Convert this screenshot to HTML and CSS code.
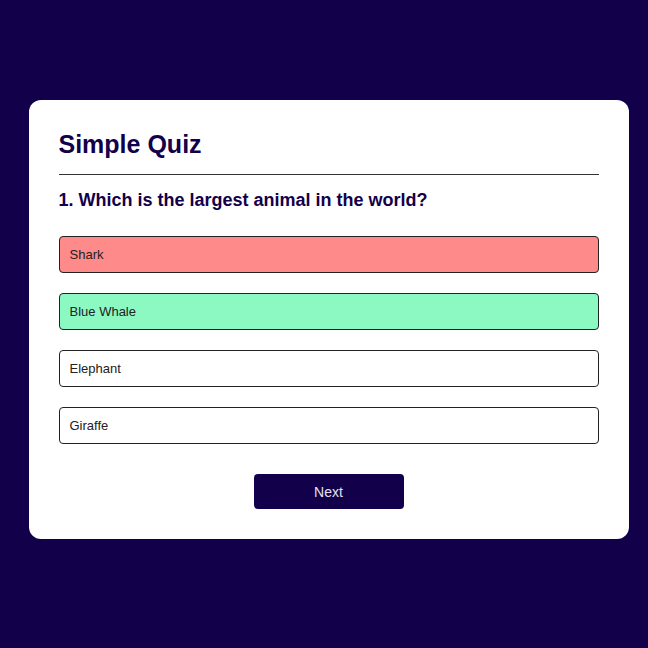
FILE: index.html
```html
<!DOCTYPE html>
<html>
<head>
<meta charset="utf-8">
<link rel="stylesheet" href="styles.css">
</head>
<body>
<div class="app">
  <h1 class="title">Simple Quiz</h1>
  <div class="quiz">
    <h2 class="question">1. Which is the largest animal in the world?</h2>
    <div class="answers">
      <button class="btn incorrect">Shark</button>
      <button class="btn correct">Blue Whale</button>
      <button class="btn">Elephant</button>
      <button class="btn">Giraffe</button>
    </div>
    <button class="next-btn">Next</button>
  </div>
</div>
</body>
</html>
```
FILE: styles.css
```css
* { box-sizing: border-box; margin: 0; padding: 0; }
html, body { background: #13004a; }
body { font-family: "Liberation Sans", Arial, sans-serif; height: 648px; padding-top: 100px; padding-left: 9px; }
.app {
  background: #fff;
  width: 600px;
  margin: 0 auto;
  border-radius: 12px;
  padding: 30px;
}
.title {
  font-size: 25px;
  line-height: 29px;
  color: #13004a;
  font-weight: 700;
  border-bottom: 1px solid #333;
  padding-bottom: 15px;
}
.quiz { padding-top: 15px; }
.question {
  font-size: 18px;
  line-height: 21px;
  color: #13004a;
  font-weight: 700;
}
.answers {
  display: flex;
  flex-direction: column;
  gap: 21px;
  margin-top: 25px;
}
.btn {
  display: block;
  width: 100%;
  height: 37px;
  background: #fff;
  color: #222;
  font-family: "Liberation Sans", Arial, sans-serif;
  font-size: 13px;
  text-align: left;
  padding: 0 10px;
  border: 1px solid #222;
  border-radius: 4px;
}
.btn.incorrect { background: #ff8a8a; }
.btn.correct { background: #8cf9c2; }
.answers { gap: 20px; }
.next-btn {
  display: block;
  width: 150px;
  height: 35px;
  margin: 30px auto 0;
  background: #13004a;
  color: #e4e0f0;
  border: 0;
  border-radius: 4px;
  font-family: "Liberation Sans", Arial, sans-serif;
  font-size: 14px;
}
```
